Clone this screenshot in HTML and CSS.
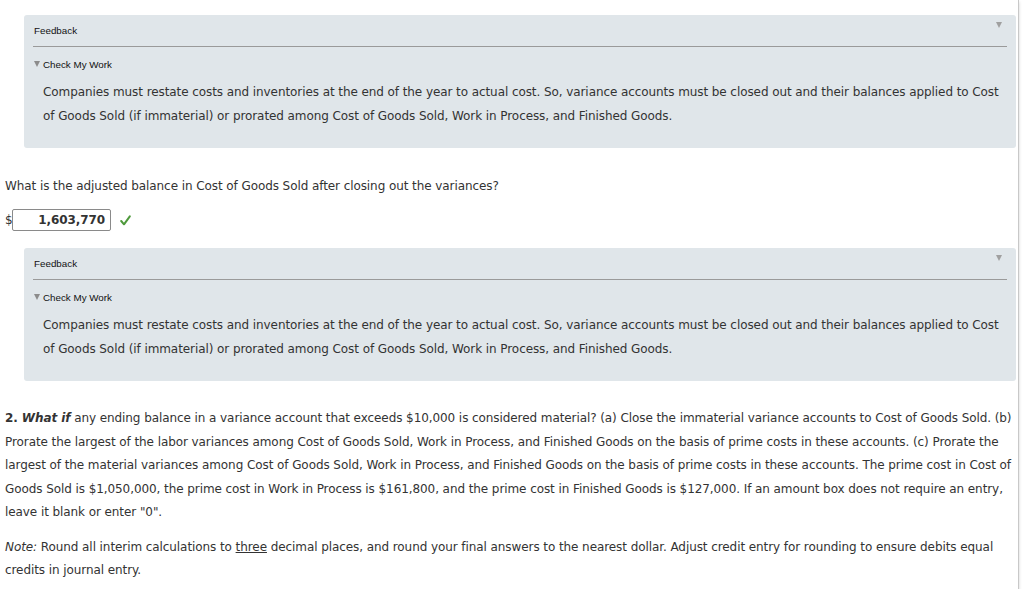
FILE: index.html
```html
<!DOCTYPE html>
<html>
<head>
<meta charset="utf-8">
<link rel="stylesheet" href="styles.css">
</head>
<body>
<div class="page">
  <div class="feedback">
    <div class="fb-head">
      <span class="fb-title">Feedback</span>
      <svg class="fb-toggle" width="6" height="6" viewBox="0 0 6 6"><path d="M0 0 H6 L3 6 Z" fill="#a0a0a0"/></svg>
    </div>
    <div class="fb-sub"><svg class="tri" width="6" height="6" viewBox="0 0 6 6"><path d="M0 0 H6 L3 6 Z" fill="#8c8c8c"/></svg>Check My Work</div>
    <p class="fb-text">Companies must restate costs and inventories at the end of the year to actual cost. So, variance accounts must be closed out and their balances applied to Cost of Goods Sold (if immaterial) or prorated among Cost of Goods Sold, Work in Process, and Finished Goods.</p>
  </div>

  <p class="question">What is the adjusted balance in Cost of Goods Sold after closing out the variances?</p>
  <div class="answer-row">
    <span class="dollar">$</span>
    <span class="answer-box">1,603,770</span>
    <svg class="check" width="11" height="11" viewBox="0 0 11 11"><path d="M1.2 6 L4 9.3 L9.8 1.3" fill="none" stroke="#4f9a3c" stroke-width="2" stroke-linecap="round" stroke-linejoin="round"/></svg>
  </div>

  <div class="feedback second">
    <div class="fb-head">
      <span class="fb-title">Feedback</span>
      <svg class="fb-toggle" width="6" height="6" viewBox="0 0 6 6"><path d="M0 0 H6 L3 6 Z" fill="#a0a0a0"/></svg>
    </div>
    <div class="fb-sub"><svg class="tri" width="6" height="6" viewBox="0 0 6 6"><path d="M0 0 H6 L3 6 Z" fill="#8c8c8c"/></svg>Check My Work</div>
    <p class="fb-text">Companies must restate costs and inventories at the end of the year to actual cost. So, variance accounts must be closed out and their balances applied to Cost of Goods Sold (if immaterial) or prorated among Cost of Goods Sold, Work in Process, and Finished Goods.</p>
  </div>

  <p class="para"><b>2. <i>What if</i></b> any ending balance in a variance account that exceeds $10,000 is considered material? (a) Close the immaterial variance accounts to Cost of Goods Sold. (b) Prorate the largest of the labor variances among Cost of Goods Sold, Work in Process, and Finished Goods on the basis of prime costs in these accounts. (c) Prorate the largest of the material variances among Cost of Goods Sold, Work in Process, and Finished Goods on the basis of prime costs in these accounts. The prime cost in Cost of Goods Sold is $1,050,000, the prime cost in Work in Process is $161,800, and the prime cost in Finished Goods is $127,000. If an amount box does not require an entry, leave it blank or enter "0".</p>
  <p class="para note"><i>Note:</i> Round all interim calculations to <u>three</u> decimal places, and round your final answers to the nearest dollar. Adjust credit entry for rounding to ensure debits equal credits in journal entry.</p>
</div>
</body>
</html>
```

FILE: styles.css
```css
html, body {
  margin: 0;
  padding: 0;
  background: #fff;
}
.page {
  width: 1019px;
  height: 589px;
  border-right: 1px solid #c8c8c8;
  box-shadow: 0 2px 3px rgba(0,0,0,0.18);
  overflow: hidden;
  padding: 15px 0 0 5px;
  box-sizing: border-box;
  font-family: "DejaVu Sans", Verdana, sans-serif;
  font-size: 12px;
  letter-spacing: -0.08px;
  color: #333;
}
.feedback {
  margin-left: 19px;
  width: 992px;
  height: 133px;
  box-sizing: border-box;
  background: #e0e6ea;
  border-radius: 3px;
  padding: 0 9px 0 9px;
  letter-spacing: normal;
}
.fb-head {
  display: flex;
  justify-content: space-between;
  align-items: center;
  height: 31px;
  border-bottom: 1px solid #9a9a9a;
  font-family: "Liberation Sans", Arial, sans-serif;
  font-size: 9.8px;
  color: #111;
}
.fb-title {
  padding-left: 1px;
}
.fb-toggle {
  margin-right: 5px;
  margin-top: -11px;
}
.fb-sub {
  margin-top: 12px;
  font-family: "Liberation Sans", Arial, sans-serif;
  font-size: 9.8px;
  color: #111;
  display: flex;
  align-items: center;
}
.tri {
  margin: 0 3px 1px 1px;
}
.fb-text {
  margin: 10px 0 0 10px;
  line-height: 24px;
  color: #333;
  letter-spacing: -0.08px;
}
.question {
  margin: 28px 0 0 0;
  line-height: 20px;
}
.answer-row {
  display: flex;
  align-items: center;
  margin-top: 13px;
  height: 22px;
}
.dollar {
  width: 7px;
}
.answer-box {
  width: 99px;
  height: 22px;
  box-sizing: border-box;
  border: 1px solid #8a8a8a;
  border-radius: 2px;
  text-align: right;
  padding-right: 5px;
  font-weight: bold;
  line-height: 20px;
  color: #333;
}
.check {
  margin-left: 9px;
}
.feedback.second {
  margin-top: 17px;
}
.para {
  margin: 26px 0 0 0;
  line-height: 23.5px;
  padding-right: 6px;
}
.note {
  margin-top: 11px;
}
```
